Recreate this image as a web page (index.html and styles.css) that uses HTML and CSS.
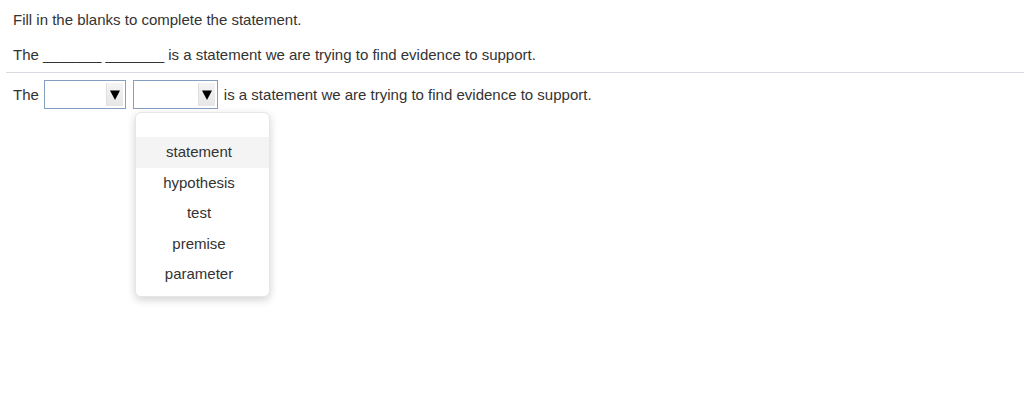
FILE: index.html
```html
<!DOCTYPE html>
<html>
<head>
<meta charset="utf-8">
<link rel="stylesheet" href="styles.css">
</head>
<body>
<div class="page">
  <p class="prompt">Fill in the blanks to complete the statement.</p>
  <p class="stmt">The _______ _______ is a statement we are trying to find evidence to support.</p>
  <div class="divider"></div>
  <div class="answer">
    <span class="word">The</span>
    <div class="select first">
      <span class="btn"><svg width="10" height="10" viewBox="0 0 10 10"><path d="M0 0.5H10L5 10Z" fill="#000"/></svg></span>
    </div>
    <div class="select second">
      <span class="btn"><svg width="10" height="10" viewBox="0 0 10 10"><path d="M0 0.5H10L5 10Z" fill="#000"/></svg></span>
    </div>
    <span class="word rest">is a statement we are trying to find evidence to support.</span>
  </div>
  <div class="menu">
    <div class="item active">statement</div>
    <div class="item">hypothesis</div>
    <div class="item">test</div>
    <div class="item">premise</div>
    <div class="item">parameter</div>
  </div>
</div>
</body>
</html>
```
FILE: styles.css
```css
html, body {
  margin: 0;
  padding: 0;
  background: #fff;
}
body {
  font-family: "Liberation Sans", Arial, sans-serif;
  font-size: 15px;
  color: #333;
}
.page {
  position: relative;
  padding-top: 10px;
  min-height: 406px;
}
.prompt {
  margin: 0 0 0 13px;
  line-height: 20px;
}
.stmt {
  margin: 15px 0 0 13px;
  line-height: 20px;
}
.divider {
  margin: 7px 0 0 6px;
  border-top: 1px solid #d8dce2;
}
.answer {
  display: flex;
  align-items: center;
  margin-top: 7px;
  padding-left: 13px;
  height: 29px;
}
.word {
  line-height: 20px;
}
.rest {
  margin-left: 6px;
}
.select {
  box-sizing: border-box;
  height: 29px;
  border: 1px solid #859fc2;
  background: #fff;
  display: flex;
  align-items: center;
  justify-content: flex-end;
  padding-right: 2px;
}
.first {
  width: 82px;
  margin-left: 5px;
}
.second {
  width: 85px;
  margin-left: 7px;
}
.btn {
  width: 16px;
  height: 23px;
  background: linear-gradient(#f4f4f4, #e6e6e6);
  border-left: 1px solid #e0e0e0;
  display: flex;
  align-items: center;
  justify-content: center;
}
.btn svg {
  display: block;
}
.menu {
  position: absolute;
  left: 135px;
  top: 112px;
  width: 135px;
  box-sizing: border-box;
  padding: 24px 0 6px;
  background: #fff;
  border: 1px solid #e6e6e6;
  border-radius: 6px;
  box-shadow: 0 3px 8px rgba(0, 0, 0, 0.18);
  z-index: 5;
}
.item {
  height: 30.5px;
  line-height: 30.5px;
  padding-right: 7px;
  text-align: center;
  color: #333;
}
.item.active {
  background: #f4f4f4;
}
```
